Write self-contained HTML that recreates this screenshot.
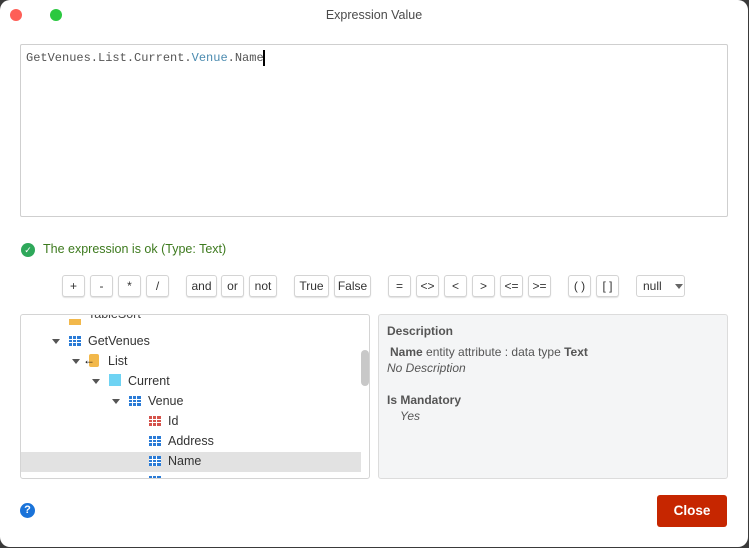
<!DOCTYPE html>
<html><head><style>
*{box-sizing:border-box;margin:0;padding:0}
body{width:749px;height:548px;background:#3a3a3a;font-family:"Liberation Sans",sans-serif;overflow:hidden;position:relative}
.win{position:absolute;left:0;top:0;width:748px;height:547px;background:#fff;border-radius:10px;overflow:hidden}
.a{position:absolute}
.dot{position:absolute;width:12px;height:12px;border-radius:50%}
.btn{position:absolute;top:275px;height:22px;border:1px solid #d4d4d4;border-radius:3px;background:#fff;box-shadow:0 1px 1px rgba(0,0,0,.12);font-size:12px;color:#333;text-align:center;line-height:20px}
.row{position:absolute;font-size:12.5px;color:#333;height:20px;line-height:20px}
.grid{position:absolute;width:12px;height:10px;background:
linear-gradient(#fff,#fff) 0 3px/12px 1px no-repeat,
linear-gradient(#fff,#fff) 0 6px/12px 1px no-repeat,
linear-gradient(90deg,#fff,#fff) 3px 0/1px 10px no-repeat,
linear-gradient(90deg,#fff,#fff) 7px 0/1px 10px no-repeat,#2a7bd6}
.tri{position:absolute;width:0;height:0;border-left:4px solid transparent;border-right:4px solid transparent;border-top:5px solid #555}
</style></head><body>
<div class="win">
<div class="dot" style="left:10px;top:9px;background:#fe5f57"></div>
<div class="dot" style="left:50px;top:9px;background:#2bc840"></div>
<div class="a" style="left:0;width:748px;top:8px;text-align:center;font-size:12.5px;color:#4a4a4a">Expression Value</div>
<div class="a" style="left:20px;top:44px;width:708px;height:173px;border:1px solid #cfcfcf;border-radius:2px"></div>
<div class="a" style="left:26px;top:51px;font-family:'Liberation Mono',monospace;font-size:12px;color:#555">GetVenues.List.Current.<span style="color:#4b8bb0">Venue</span>.Name</div>
<div class="a" style="left:263px;top:50px;width:2px;height:16px;background:#000"></div>
<div class="a" style="left:21px;top:243px;width:14px;height:14px;border-radius:50%;background:#2ea85a;color:#fff;font-size:9px;text-align:center;line-height:14px">✓</div>
<div class="a" style="left:43px;top:242px;font-size:12.5px;color:#3d7a1e">The expression is ok (Type: Text)</div>
<div class="btn" style="left:62px;width:23px">+</div>
<div class="btn" style="left:90px;width:23px">-</div>
<div class="btn" style="left:118px;width:23px">*</div>
<div class="btn" style="left:146px;width:23px">/</div>
<div class="btn" style="left:186px;width:31px">and</div>
<div class="btn" style="left:221px;width:23px">or</div>
<div class="btn" style="left:249px;width:28px">not</div>
<div class="btn" style="left:294px;width:35px">True</div>
<div class="btn" style="left:334px;width:37px">False</div>
<div class="btn" style="left:388px;width:23px">=</div>
<div class="btn" style="left:416px;width:23px">&lt;&gt;</div>
<div class="btn" style="left:444px;width:23px">&lt;</div>
<div class="btn" style="left:472px;width:23px">&gt;</div>
<div class="btn" style="left:500px;width:23px">&lt;=</div>
<div class="btn" style="left:528px;width:23px">&gt;=</div>
<div class="btn" style="left:568px;width:23px">( )</div>
<div class="btn" style="left:596px;width:23px">[ ]</div>
<div class="btn" style="left:636px;width:49px;text-align:left;padding-left:6px;box-shadow:none">null<span class="tri" style="left:38px;top:8px;border-top-color:#666"></span></div>
<div class="a" style="left:20px;top:314px;width:350px;height:165px;border:1px solid #d4d4d4;border-radius:3px;overflow:hidden">
 <div class="a" style="left:0;top:137px;width:340px;height:20px;background:#e2e2e2"></div>
 <div class="a" style="left:340px;top:35px;width:8px;height:36px;border-radius:4px;background:#c8c8c8"></div>
 <div class="a" style="left:48px;top:4px;width:12px;height:6px;background:#f2b84b"></div>
 <div class="row" style="left:67px;top:-11px;color:#444">TableSort</div>
 <div class="tri" style="left:31px;top:24px"></div><div class="grid" style="left:48px;top:21px"></div><div class="row" style="left:67px;top:16px">GetVenues</div>
 <div class="tri" style="left:51px;top:44px"></div><div class="a" style="left:68px;top:39px;width:10px;height:13px;background:#f2b84b;border-radius:2px"></div><div class="a" style="left:62px;top:38px;font-size:12px;font-weight:bold">←</div><div class="row" style="left:87px;top:36px">List</div>
 <div class="tri" style="left:71px;top:64px"></div><div class="a" style="left:88px;top:59px;width:12px;height:12px;background:#6ed3f3"></div><div class="row" style="left:107px;top:56px">Current</div>
 <div class="tri" style="left:91px;top:84px"></div><div class="grid" style="left:108px;top:81px"></div><div class="row" style="left:127px;top:76px">Venue</div>
 <div class="grid" style="left:128px;top:101px;background-color:#d5534a"></div><div class="row" style="left:147px;top:96px">Id</div>
 <div class="grid" style="left:128px;top:121px"></div><div class="row" style="left:147px;top:116px">Address</div>
 <div class="grid" style="left:128px;top:141px"></div><div class="row" style="left:147px;top:136px">Name</div>
 <div class="grid" style="left:128px;top:161px"></div>
</div>
<div class="a" style="left:378px;top:314px;width:350px;height:165px;border:1px solid #dcdcdc;border-radius:3px;background:#f4f5f6;font-size:12px;color:#555">
 <div class="a" style="left:8px;top:9px;font-weight:bold">Description</div>
 <div class="a" style="left:11px;top:30px;white-space:nowrap"><b>Name</b> entity attribute : data type <b>Text</b></div>
 <div class="a" style="left:8px;top:46px;font-style:italic">No Description</div>
 <div class="a" style="left:8px;top:78px;font-weight:bold">Is Mandatory</div>
 <div class="a" style="left:21px;top:94px;font-style:italic">Yes</div>
</div>
<div class="a" style="left:20px;top:503px;width:15px;height:15px;border-radius:50%;background:#1a73d9;color:#fff;font-size:11px;font-weight:bold;text-align:center;line-height:15px">?</div>
<div class="a" style="left:657px;top:495px;width:70px;height:32px;border-radius:3px;background:#c62600;color:#fff;font-weight:bold;font-size:13.5px;text-align:center;line-height:32px">Close</div>
</div>
</body></html>
